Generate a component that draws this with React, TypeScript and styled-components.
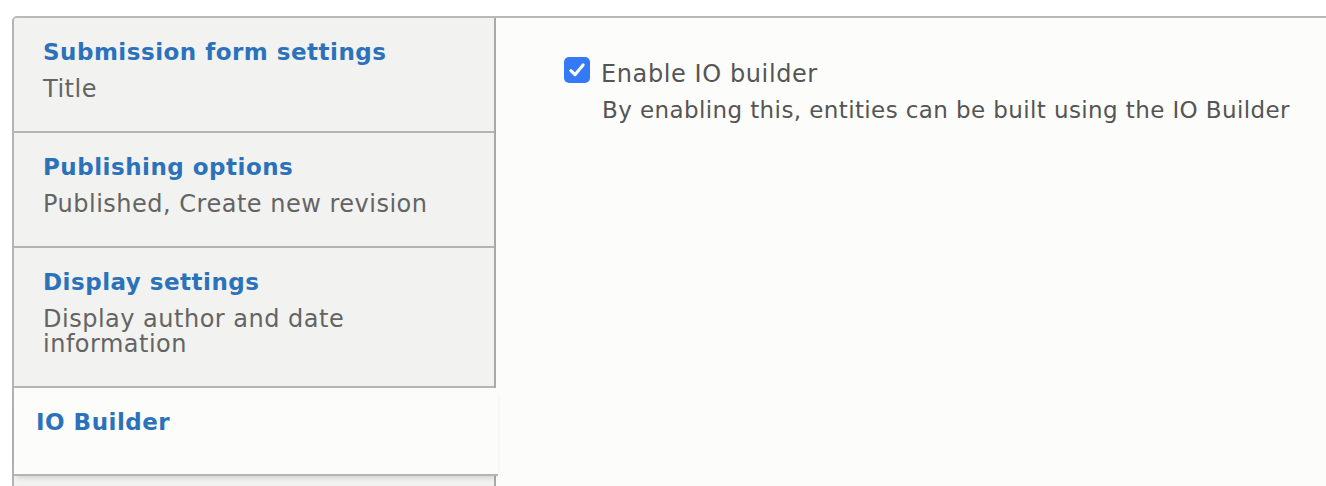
import React from "react";
import styled, { createGlobalStyle, css } from "styled-components";

const GlobalStyle = createGlobalStyle`
  html, body {
    margin: 0;
    padding: 0;
    background: #ffffff;
    overflow: hidden;
  }
  body {
    font-family: "DejaVu Sans", "Noto Sans", sans-serif;
    -webkit-font-smoothing: antialiased;
  }
`;

const Page = styled.div`
  display: flex;
  flex-direction: column;
  padding: 16px 0 0 12px;
  height: 486px;
  box-sizing: border-box;
  overflow: hidden;
`;

const VerticalTabs = styled.div`
  display: flex;
  flex: 1;
  border-top: 2px solid #b9b9b7;
  border-left: 2px solid #b3b3b1;
  border-top-left-radius: 5px;
  background: #fcfcfa;
`;

const Menu = styled.ul`
  list-style: none;
  margin: 0;
  padding: 0;
  width: 480px;
  flex-shrink: 0;
  background: #f2f2f0;
  border-right: 2px solid #a9a9a7;
  border-top-left-radius: 4px;
`;

const MenuItem = styled.li<{ $selected?: boolean }>`
  display: flex;
  flex-direction: column;
  padding: 19px 16px 29px 29px;
  border-bottom: 2px solid #b4b4b1;
  ${(p) =>
    p.$selected &&
    css`
      position: relative;
      z-index: 1;
      margin-right: -4px;
      padding: 19px 16px 37px 22px;
      background: #fcfcfa;
      box-shadow: 0 4px 6px -3px rgba(0, 0, 0, 0.18);
    `}
`;

const TabTitle = styled.a`
  font-size: 23px;
  font-weight: bold;
  letter-spacing: 0.5px;
  line-height: 30px;
  color: #2b72bb;
  text-decoration: none;
`;

const TabSummary = styled.span`
  margin-top: 10px;
  font-size: 24px;
  letter-spacing: 0.5px;
  line-height: 25px;
  color: #646464;
  max-width: 400px;
`;

const Pane = styled.div`
  flex: 1;
  padding: 38px 0 0 68px;
  background: #fcfcfa;
`;

const CheckRow = styled.label`
  display: flex;
  align-items: flex-start;
  gap: 11px;
  font-size: 24px;
  letter-spacing: 0.6px;
  line-height: 36px;
  color: #555555;
`;

const Box = styled.span`
  width: 26px;
  height: 26px;
  margin-top: 1px;
  border-radius: 5px;
  background: #3479f5;
  display: inline-flex;
  align-items: center;
  justify-content: center;
  flex-shrink: 0;
`;

const Description = styled.div`
  margin: 5px 0 0 38px;
  font-size: 23px;
  letter-spacing: 0.4px;
  line-height: 26px;
  color: #555555;
`;

const tabs = [
  { title: "Submission form settings", summary: "Title" },
  { title: "Publishing options", summary: "Published, Create new revision" },
  { title: "Display settings", summary: "Display author and date information" },
];

export default function App() {
  return (
    <>
      <GlobalStyle />
      <Page>
        <VerticalTabs>
          <Menu>
            {tabs.map((t) => (
              <MenuItem key={t.title}>
                <TabTitle href="#">{t.title}</TabTitle>
                <TabSummary>{t.summary}</TabSummary>
              </MenuItem>
            ))}
            <MenuItem $selected>
              <TabTitle href="#">IO Builder</TabTitle>
            </MenuItem>
          </Menu>
          <Pane>
            <CheckRow>
              <Box>
                <svg width="20" height="20" viewBox="0 0 18 18">
                  <path
                    d="M3.5 9.5 L7.2 13.2 L14.5 4.5"
                    fill="none"
                    stroke="#ffffff"
                    strokeWidth="2.8"
                    strokeLinecap="round"
                    strokeLinejoin="round"
                  />
                </svg>
              </Box>
              Enable IO builder
            </CheckRow>
            <Description>
              By enabling this, entities can be built using the IO Builder
            </Description>
          </Pane>
        </VerticalTabs>
      </Page>
    </>
  );
}
